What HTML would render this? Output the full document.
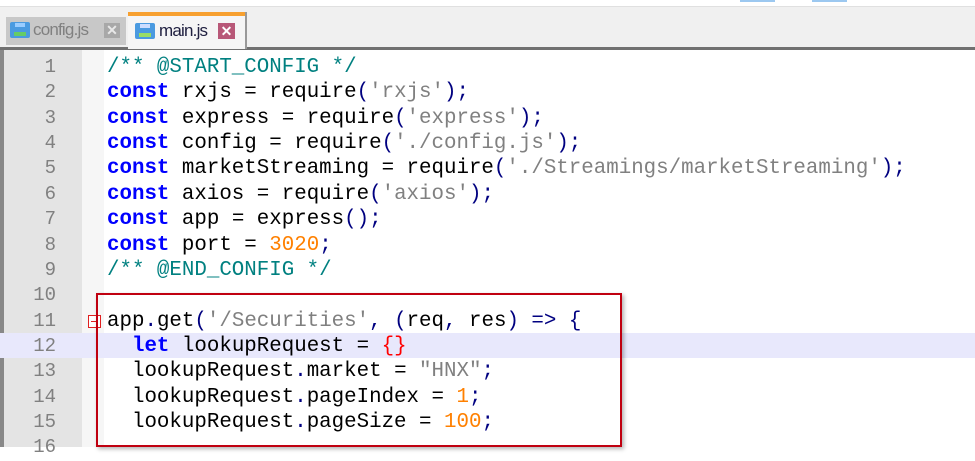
<!DOCTYPE html>
<html><head><style>
body{margin:0;width:975px;height:447px;overflow:hidden;background:#fff;position:relative;font-family:"Liberation Sans",sans-serif}
.abs{position:absolute}
.code{font-family:"Liberation Mono",monospace;font-size:20.8px;line-height:25.36px;white-space:pre;color:#000}
.k{color:#0000ff;font-weight:bold}
.c{color:#008080}
.s{color:#808080}
.o{color:#000080}
.e{color:#000}
.n{color:#ff8000}
.ln{font-family:"Liberation Mono",monospace;font-size:19px;line-height:25.36px;color:#808080;text-align:right;white-space:pre}
.fl{width:20px;height:16px;border-radius:2px;background:#3a8fd8}
</style></head><body>
<div class="abs" style="left:0;top:0;width:975px;height:6px;background:#fff"></div>
<div class="abs" style="left:740px;top:0;width:35px;height:2px;background:#9cc8f0"></div>
<div class="abs" style="left:812px;top:0;width:35px;height:2px;background:#9cc8f0"></div>
<div class="abs" style="left:0;top:6px;width:975px;height:43px;background:#f0f0f0;border-top:1px solid #e0e0e0"></div>
<div class="abs" style="left:0;top:47px;width:975px;height:3px;background:#707070"></div>
<div class="abs" style="left:6px;top:17px;width:120px;height:28px;background:#c8c8c8"></div>
<div class="abs fl" style="left:10px;top:22px;background:#4a9ae0"><div class="abs" style="left:4px;top:10px;width:12px;height:4px;background:#6c6"></div><div class="abs" style="left:5px;top:1px;width:10px;height:4px;background:#9cf"></div></div>
<div class="abs" style="left:33px;top:20px;font-size:17px;color:#808080;letter-spacing:-0.8px">config.js</div>
<div class="abs" style="left:104px;top:23px;width:16px;height:15px;background:#a8a8a8;color:#e8e8e8;font-size:14px;line-height:15px;text-align:center;font-weight:bold">✕</div>
<div class="abs" style="left:128px;top:12px;width:117px;height:37px;background:#f5f5f5;border-right:2px solid #999"></div>
<div class="abs" style="left:128px;top:12px;width:117px;height:4px;background:#f7a030"></div>
<div class="abs fl" style="left:135px;top:23px;background:#4a9ae0"><div class="abs" style="left:4px;top:10px;width:12px;height:4px;background:#9d6"></div><div class="abs" style="left:5px;top:1px;width:10px;height:4px;background:#cdf"></div></div>
<div class="abs" style="left:159px;top:21px;font-size:17px;color:#202040;letter-spacing:-0.8px">main.js</div>
<div class="abs" style="left:218px;top:23px;width:17px;height:16px;background:#b85878;color:#fff;font-size:14px;line-height:16px;text-align:center;font-weight:bold">✕</div>
<div class="abs" style="left:0;top:50px;width:4px;height:397px;background:#888"></div>
<div class="abs" style="left:4px;top:50px;width:78px;height:397px;background:#e4e4e4"></div>
<div class="abs" style="left:82px;top:50px;width:22px;height:397px;background:#f6f6f6"></div>
<div class="abs" style="left:0;top:333px;width:975px;height:25px;background:#e8e8fc"></div>
<div class="abs ln" style="left:4px;top:55px;width:52px">1
2
3
4
5
6
7
8
9
10
11
12
13
14
15
16</div>
<div class="abs code" style="left:107px;top:55px"><span class="c">/** @START_CONFIG */</span>
<span class="k">const</span> rxjs <span class="e">=</span> require<span class="o">(</span><span class="s">'rxjs'</span><span class="o">);</span>
<span class="k">const</span> express <span class="e">=</span> require<span class="o">(</span><span class="s">'express'</span><span class="o">);</span>
<span class="k">const</span> config <span class="e">=</span> require<span class="o">(</span><span class="s">'./config.js'</span><span class="o">);</span>
<span class="k">const</span> marketStreaming <span class="e">=</span> require<span class="o">(</span><span class="s">'./Streamings/marketStreaming'</span><span class="o">);</span>
<span class="k">const</span> axios <span class="e">=</span> require<span class="o">(</span><span class="s">'axios'</span><span class="o">);</span>
<span class="k">const</span> app <span class="e">=</span> express<span class="o">();</span>
<span class="k">const</span> port <span class="e">=</span> <span class="n">3020</span><span class="o">;</span>
<span class="c">/** @END_CONFIG */</span>

app<span class="o">.</span>get<span class="o">(</span><span class="s">'/Securities'</span><span class="o">,</span> <span class="o">(</span>req<span class="o">,</span> res<span class="o">)</span> <span class="o">=&gt;</span> <span class="o">{</span>
  <span class="k">let</span> lookupRequest <span class="e">=</span> <span style="color:#f00">{}</span>
  lookupRequest<span class="o">.</span>market <span class="e">=</span> <span class="s">"HNX"</span><span class="o">;</span>
  lookupRequest<span class="o">.</span>pageIndex <span class="e">=</span> <span class="n">1</span><span class="o">;</span>
  lookupRequest<span class="o">.</span>pageSize <span class="e">=</span> <span class="n">100</span><span class="o">;</span></div>
<div class="abs" style="left:88px;top:315px;width:11px;height:11px;border:1px solid #e02020;background:#fff"><div class="abs" style="left:2px;top:5px;width:7px;height:1px;background:#e02020"></div></div>
<div class="abs" style="left:96px;top:293px;width:522px;height:150px;border:2px solid #c00010;box-shadow:2px 2px 4px rgba(0,0,0,0.3)"></div>
</body></html>
